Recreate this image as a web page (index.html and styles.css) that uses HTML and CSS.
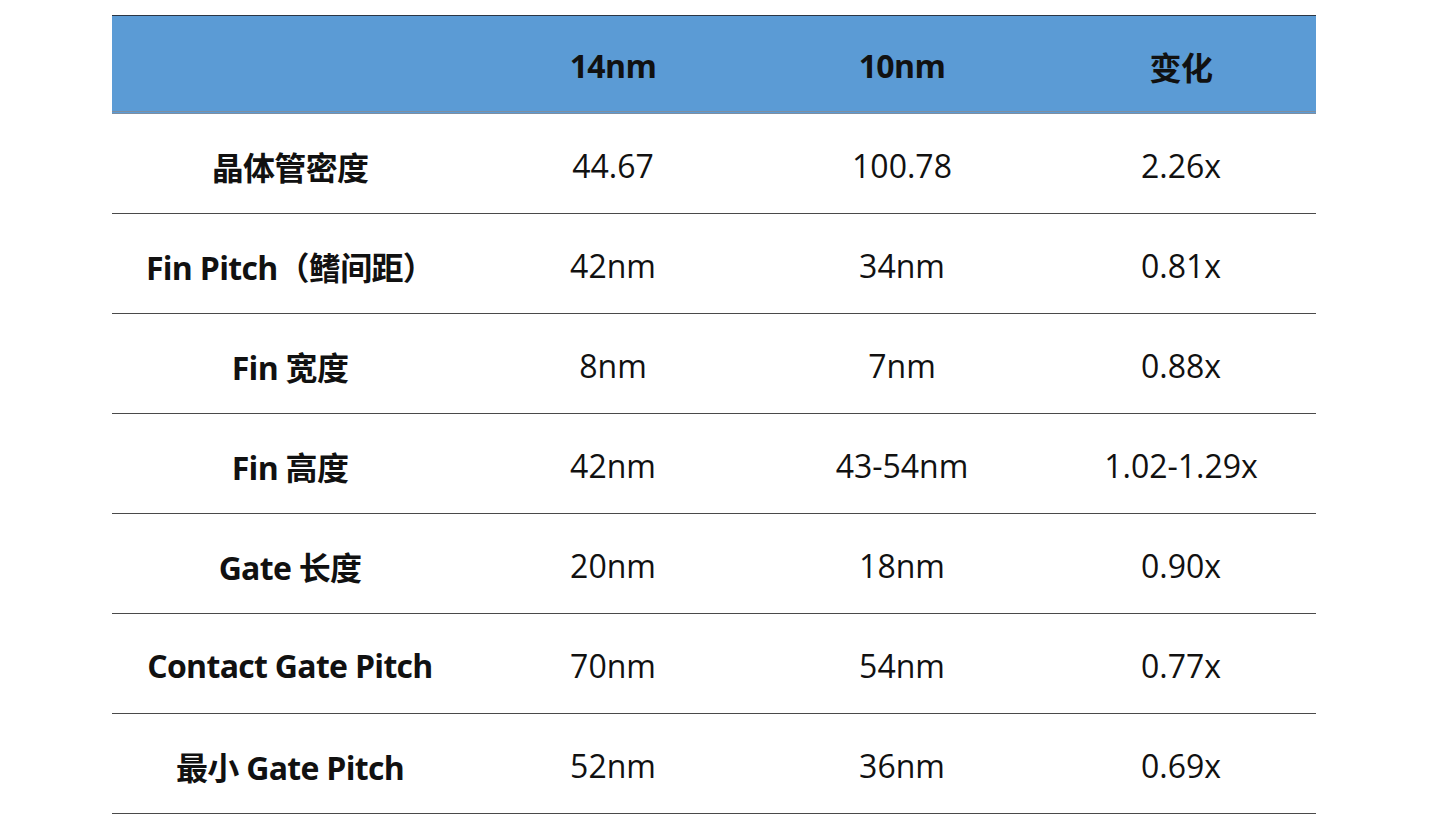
FILE: index.html
```html
<!DOCTYPE html>
<html lang="zh">
<head>
<meta charset="utf-8">
<title>14nm vs 10nm</title>
<link rel="stylesheet" href="styles.css">
</head>
<body>
<div class="page">
<table class="spec">
<colgroup>
<col class="c1"><col class="c2"><col class="c3"><col class="c4">
</colgroup>
<thead>
<tr><th></th><th>14nm</th><th>10nm</th><th>变化</th></tr>
</thead>
<tbody>
<tr><th>晶体管密度</th><td>44.67</td><td>100.78</td><td>2.26x</td></tr>
<tr><th>Fin Pitch（鳍间距）</th><td>42nm</td><td>34nm</td><td>0.81x</td></tr>
<tr><th>Fin 宽度</th><td>8nm</td><td>7nm</td><td>0.88x</td></tr>
<tr><th>Fin 高度</th><td>42nm</td><td>43-54nm</td><td>1.02-1.29x</td></tr>
<tr><th>Gate 长度</th><td>20nm</td><td>18nm</td><td>0.90x</td></tr>
<tr><th>Contact Gate Pitch</th><td>70nm</td><td>54nm</td><td>0.77x</td></tr>
<tr><th>最小 Gate Pitch</th><td>52nm</td><td>36nm</td><td>0.69x</td></tr>
</tbody>
</table>
</div>
</body>
</html>
```
FILE: styles.css
```css
html, body {
  margin: 0;
  padding: 0;
  background: #ffffff;
}
.page {
  padding: 15px 0 0 112px;
}
.spec {
  width: 1204px;
  border-collapse: collapse;
  table-layout: fixed;
  font-family: "Open Sans", "Noto Sans CJK SC", sans-serif;
  font-size: 32px;
  color: #111111;
}
.c1 { width: 356px; }
.c2 { width: 290px; }
.c3 { width: 288px; }
.c4 { width: 270px; }
.spec th, .spec td {
  text-align: center;
  vertical-align: middle;
  padding: 4px 0 0 0;
  height: 95px;
  box-sizing: content-box;
}
.spec thead th {
  background: #5b9bd5;
  font-weight: 700;
  letter-spacing: -0.6px;
  border-top: 1px solid #2b3644;
  border-bottom: 3px double #7d8ea1;
  height: 91px;
}
.spec tbody th {
  font-weight: 700;
  letter-spacing: -0.7px;
}
.spec tbody td {
  font-weight: 400;
}
.spec tbody tr {
  border-bottom: 1px solid #4a4a4a;
}
```
